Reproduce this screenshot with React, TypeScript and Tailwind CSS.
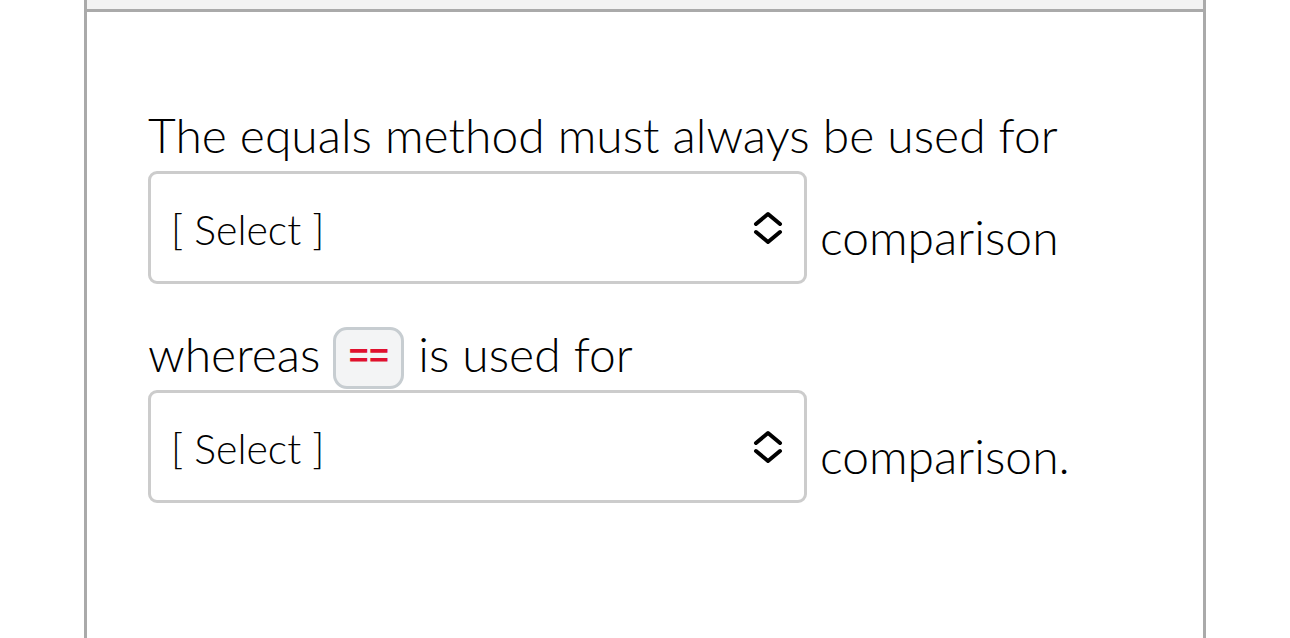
import React from 'react';

const Chevrons: React.FC = () => (
  <svg width="30" height="36" viewBox="0 0 30 36" fill="none" stroke="#000" strokeWidth="4" strokeLinecap="round" strokeLinejoin="round">
    <polyline points="3,14 15,4 27,14" />
    <polyline points="3,22 15,32 27,22" />
  </svg>
);

const SelectBox: React.FC = () => (
  <div className="w-[659px] h-[113px] shrink-0 border-[3px] border-[#cccccc] rounded-[9px] bg-white flex items-center justify-between pl-[20px] pr-[21px]">
    <span className="text-[41px] font-light leading-none pt-[3px]">[ Select ]</span>
    <Chevrons />
  </div>
);

const App: React.FC = () => {
  return (
    <div className="w-[1290px] h-[638px] bg-white overflow-hidden font-['Lato_Light','Lato','Liberation_Sans',sans-serif] text-black">
      <div className="ml-[84px] w-[1122px] h-[638px] border-x-[3px] border-[#aaaaaa]">
        <div className="h-[12px] bg-[#f3f3f3] border-b-[3px] border-[#aaaaaa]"></div>
        <div className="pl-[61px] pt-[94px] flex flex-col font-light text-[48px]">
          <div className="leading-[58px]">The equals method must always be used for</div>
          <div className="mt-[7px] flex items-start">
            <SelectBox />
            <span className="ml-[13px] mt-[37px] leading-[58px]">comparison</span>
          </div>
          <div className="mt-[41px] flex items-start leading-[58px]">
            <span>whereas</span>
            <span className="ml-[13px] mt-[2px] h-[62px] px-[12px] flex items-center rounded-[14px] border-[3px] border-[#c7cdd1] bg-[#f3f4f5] font-['Liberation_Mono',monospace] font-bold text-[34px] text-[#e0102f] leading-none">
              ==
            </span>
            <span className="ml-[14px]">is used for</span>
          </div>
          <div className="mt-[1px] flex items-start">
            <SelectBox />
            <span className="ml-[13px] mt-[37px] leading-[58px]">comparison.</span>
          </div>
        </div>
      </div>
    </div>
  );
};

export default App;
